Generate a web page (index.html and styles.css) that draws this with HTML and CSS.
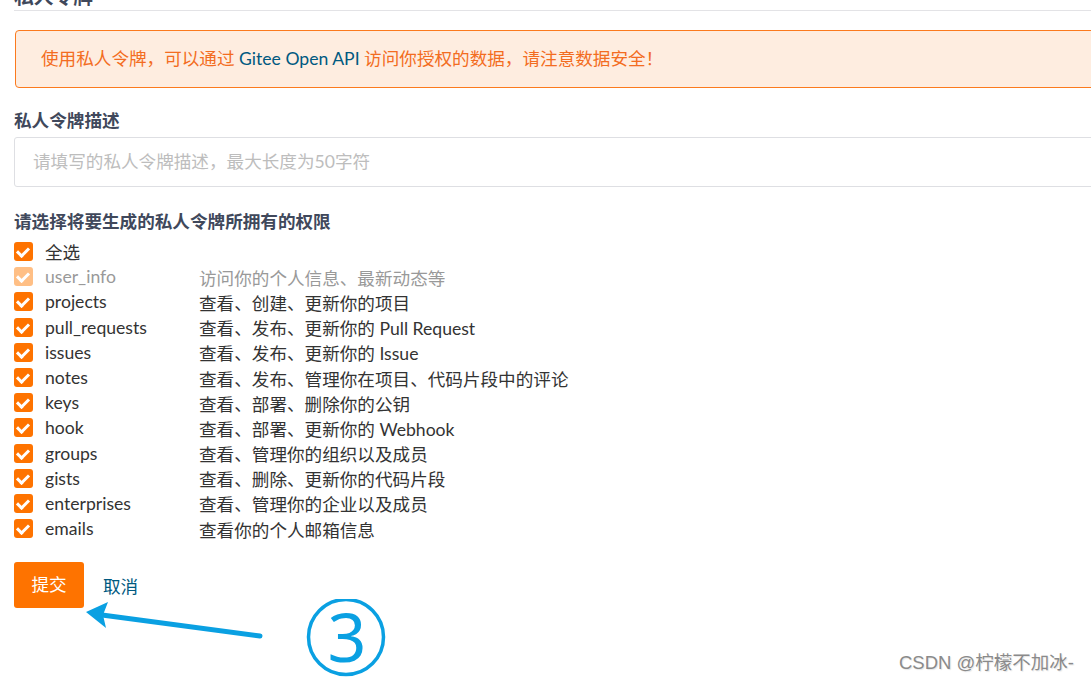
FILE: index.html
```html
<!DOCTYPE html>
<html lang="zh">
<head>
<meta charset="utf-8">
<link rel="stylesheet" href="styles.css">
</head>
<body>
<div class="page">
  <div class="title">私人令牌</div>
  <div class="alert">使用私人令牌，可以通过 <span class="link">Gitee Open API</span> 访问你授权的数据，请注意数据安全！</div>
  <div class="label label-desc">私人令牌描述</div>
  <div class="input">请填写的私人令牌描述，最大长度为50字符</div>
  <div class="label label-perm">请选择将要生成的私人令牌所拥有的权限</div>
  <div class="perms">
    <div class="row"><span class="cb"></span><span class="name">全选</span></div>
    <div class="row disabled"><span class="cb"></span><span class="name">user_info</span><span class="desc">访问你的个人信息、最新动态等</span></div>
    <div class="row"><span class="cb"></span><span class="name">projects</span><span class="desc">查看、创建、更新你的项目</span></div>
    <div class="row"><span class="cb"></span><span class="name">pull_requests</span><span class="desc">查看、发布、更新你的 Pull Request</span></div>
    <div class="row"><span class="cb"></span><span class="name">issues</span><span class="desc">查看、发布、更新你的 Issue</span></div>
    <div class="row"><span class="cb"></span><span class="name">notes</span><span class="desc">查看、发布、管理你在项目、代码片段中的评论</span></div>
    <div class="row"><span class="cb"></span><span class="name">keys</span><span class="desc">查看、部署、删除你的公钥</span></div>
    <div class="row"><span class="cb"></span><span class="name">hook</span><span class="desc">查看、部署、更新你的 Webhook</span></div>
    <div class="row"><span class="cb"></span><span class="name">groups</span><span class="desc">查看、管理你的组织以及成员</span></div>
    <div class="row"><span class="cb"></span><span class="name">gists</span><span class="desc">查看、删除、更新你的代码片段</span></div>
    <div class="row"><span class="cb"></span><span class="name">enterprises</span><span class="desc">查看、管理你的企业以及成员</span></div>
    <div class="row"><span class="cb"></span><span class="name">emails</span><span class="desc">查看你的个人邮箱信息</span></div>
  </div>
  <div class="actions">
    <span class="btn">提交</span>
    <span class="cancel">取消</span>
  </div>
</div>
<svg class="annot" width="420" height="79" viewBox="0 0 420 79">
  <line x1="260" y1="37" x2="102" y2="16" stroke="#0aa0e2" stroke-width="5" stroke-linecap="round"/>
  <polygon points="86,13 108,3 103,16 106,29" fill="#0aa0e2"/>
  <circle cx="346" cy="38" r="37.5" fill="none" stroke="#0aa0e2" stroke-width="3.5"/>
  <text x="347" y="63" text-anchor="middle" class="three">3</text>
</svg>
<div class="watermark">CSDN @柠檬不加冰-</div>
</body>
</html>
```
FILE: styles.css
```css
html, body {
  margin: 0;
  padding: 0;
  background: #fff;
  overflow: hidden;
  width: 1091px;
  height: 678px;
  position: relative;
}
body {
  font-family: "Lato", "Noto Sans CJK SC", sans-serif;
  font-size: 17.6px;
  color: #333;
}
.page {
  padding-left: 14px;
  width: 1140px;
}
.title {
  margin-top: -16px;
  height: 26px;
  line-height: 24px;
  font-size: 19.8px;
  font-weight: bold;
  color: #40485b;
  border-bottom: 1px solid #e3e3e6;
}
.alert {
  margin-top: 19px;
  margin-left: 1px;
  border: 1px solid #fb7a1e;
  border-radius: 4px;
  background: #feede0;
  padding: 16px 25px;
  line-height: 24px;
  color: #f36c21;
}
.alert .link { color: #005980; }
.label {
  font-weight: bold;
  color: #40485b;
  line-height: 24px;
}
.label-desc { margin-top: 21px; }
.input {
  margin-top: 4px;
  height: 48px;
  border: 1px solid #dedfe3;
  border-radius: 3px;
  line-height: 48px;
  padding-left: 18px;
  color: #bdbdbd;
}
.label-perm { margin-top: 23px; }
.perms { margin-top: 5px; }
.row {
  display: flex;
  align-items: center;
  height: 25.2px;
}
.cb {
  width: 19px;
  height: 19px;
  border-radius: 3px;
  background: #fe7300;
  position: relative;
  flex: none;
}
.cb::after {
  content: "";
  position: absolute;
  left: 5px;
  top: 3px;
  width: 5px;
  height: 9px;
  border: solid #fff;
  border-width: 0 3px 3px 0;
  transform: rotate(45deg);
}
.row.disabled .cb { background: #ffbf85; }
.row.disabled { color: #999; }
.name {
  margin-left: 12px;
  width: 154px;
}
.desc { padding-top: 1px; }
.actions {
  margin-top: 21px;
  display: flex;
  align-items: center;
}
.btn {
  width: 70px;
  height: 46px;
  line-height: 46px;
  text-align: center;
  background: #fe7300;
  color: #fff;
  border-radius: 3px;
}
.cancel {
  margin-left: 19px;
  color: #005980;
}
.annot {
  position: absolute;
  left: 0;
  top: 599px;
}
.three {
  font-family: "Noto Sans", sans-serif;
  font-size: 68px;
  fill: #0aa0e2;
}
.watermark {
  position: absolute;
  left: 899px;
  top: 648px;
  font-size: 18.5px;
  color: #8a8a8a;
  text-shadow: 1px 1px 1px #e6e6e6;
  font-family: "Liberation Sans", "Noto Sans CJK SC", sans-serif;
}
```
